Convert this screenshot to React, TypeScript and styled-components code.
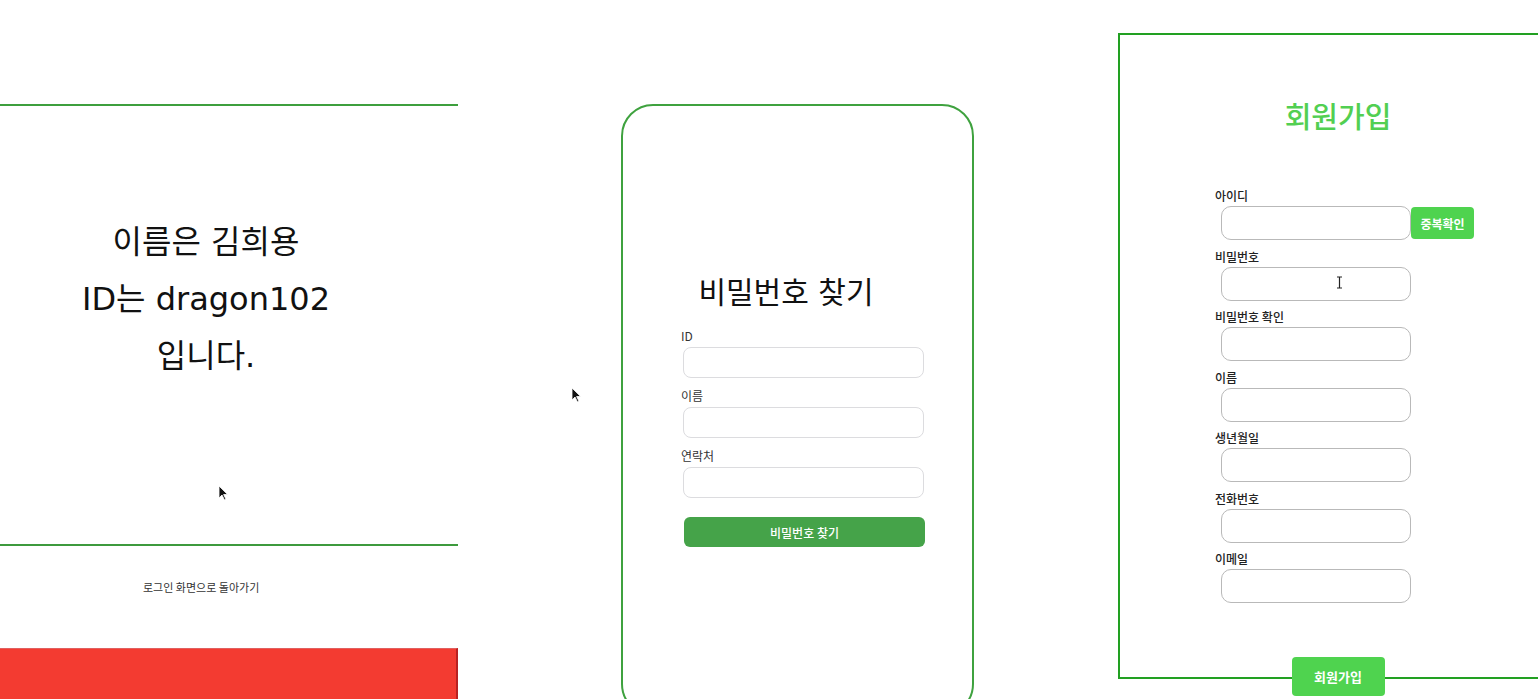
import React from "react";
import styled, { createGlobalStyle } from "styled-components";

const GlobalStyle = createGlobalStyle`
	html, body {
		margin: 0;
		padding: 0;
		background: #fff;
	}
	body {
		font-family: "Noto Sans CJK KR", "Noto Sans", sans-serif;
		color: #222;
	}
`;

const Page = styled.div`
	position: relative;
	display: flex;
	align-items: flex-start;
	width: 1538px;
	height: 699px;
	overflow: hidden;
	background: #fff;
`;

// ---- left: 아이디 찾기 결과 ----
const ResultColumn = styled.div`
	position: relative;
	flex: 0 0 458px;
	height: 699px;
	display: flex;
	flex-direction: column;
	padding-top: 104px;
	box-sizing: border-box;
`;

const ResultCard = styled.div`
	height: 442px;
	box-sizing: border-box;
	border-top: 2px solid #3d9f3d;
	border-bottom: 2px solid #3d9a3d;
	padding: 108px 46px 0 0;
	text-align: center;
`;

const ResultLine = styled.div`
	font-family: "DejaVu Sans", "Noto Sans CJK KR", sans-serif;
	font-size: 32px;
	line-height: 57px;
	color: #111;
`;

const BackLink = styled.a`
	display: block;
	margin-top: 33px;
	padding-left: 143px;
	font-size: 11px;
	line-height: 16px;
	color: #333;
	text-decoration: none;
	cursor: pointer;
`;

const AlertBar = styled.div`
	margin-top: auto;
	height: 51px;
	background: #f33b31;
	border-top: 1px solid #e06060;
	border-right: 2px solid #b82222;
	box-sizing: border-box;
`;

// ---- middle: 비밀번호 찾기 ----
const FindCard = styled.div`
	position: relative;
	flex: 0 0 353px;
	height: 612px;
	margin: 104px 0 0 163px;
	box-sizing: border-box;
	border: 2px solid #3fa23f;
	border-radius: 32px;
	padding-top: 169px;
`;

const FindTitle = styled.h2`
	margin: 0;
	padding-right: 23px;
	font-family: "DejaVu Sans", "Noto Sans CJK KR", sans-serif;
	font-weight: 400;
	font-size: 30px;
	line-height: 36px;
	text-align: center;
	color: #111;
`;

const FindForm = styled.form`
	display: flex;
	flex-direction: column;
	width: 243px;
	margin: 17px 0 0 58px;
`;

const FindLabel = styled.label`
	font-size: 12px;
	line-height: 16px;
	color: #333;
	margin-bottom: 3px;
`;

const FindInput = styled.input`
	width: 241px;
	height: 31px;
	margin: 0 0 10px 2px;
	box-sizing: border-box;
	border: 1px solid #dcdcdf;
	border-radius: 8px;
	background: #fff;
	outline: none;
`;

const FindButton = styled.button`
	width: 241px;
	height: 30px;
	margin: 9px 0 0 3px;
	border: none;
	border-radius: 6px;
	background: #45a349;
	color: #fff;
	font-family: "Noto Sans CJK KR", sans-serif;
	font-size: 12px;
	font-weight: 500;
	cursor: pointer;
`;

// ---- right: 회원가입 ----
const JoinCard = styled.div`
	position: relative;
	flex: 0 0 440px;
	height: 646px;
	margin: 33px 0 0 144px;
	box-sizing: border-box;
	border: 2px solid #22a022;
	padding-top: 62px;
	display: flex;
	flex-direction: column;
`;

const JoinTitle = styled.h1`
	margin: 0;
	font-size: 29px;
	line-height: 36px;
	font-weight: 500;
	text-align: center;
	color: #52cf52;
`;

const JoinForm = styled.div`
	display: flex;
	flex-direction: column;
	gap: 8.5px;
	margin-top: 55px;
	padding-left: 95px;
`;

const JoinField = styled.div`
	display: flex;
	flex-direction: column;
`;

const JoinLabel = styled.label`
	font-size: 12px;
	line-height: 16px;
	font-weight: 500;
	color: #222;
	margin-bottom: 2px;
`;

const InputRow = styled.div`
	display: flex;
	align-items: center;
`;

const JoinInput = styled.input`
	width: 190px;
	height: 34px;
	margin-left: 6px;
	box-sizing: border-box;
	border: 1px solid #b9b9b9;
	border-radius: 10px;
	background: #fff;
	outline: none;
`;

const CheckButton = styled.button`
	width: 63px;
	height: 32px;
	border: none;
	border-radius: 4px;
	background: #4fd34f;
	color: #fff;
	font-family: "Noto Sans CJK KR", sans-serif;
	font-size: 12px;
	font-weight: 700;
	cursor: pointer;
`;

const JoinButton = styled.button`
	align-self: center;
	margin: auto 0 -19px;
	width: 93px;
	height: 39px;
	border: none;
	border-radius: 4px;
	background: #4fd34f;
	color: #fff;
	font-family: "Noto Sans CJK KR", sans-serif;
	font-size: 13px;
	font-weight: 700;
	cursor: pointer;
`;

// mouse pointers captured in the screenshot
const Pointer = styled.svg<{ $x: number; $y: number }>`
	position: absolute;
	left: ${(p) => p.$x}px;
	top: ${(p) => p.$y}px;
	pointer-events: none;
`;

const Arrow = ({ x, y }: { x: number; y: number }) => (
	<Pointer $x={x} $y={y} width='11' height='16' viewBox='0 0 11 16'>
		<path d='M1 1 L1 13 L4 10 L6.5 15 L8 14.3 L5.6 9.5 L9.6 9.5 Z' fill='#111' stroke='#fff' strokeWidth='0.8' />
	</Pointer>
);

const TextCursor = ({ x, y }: { x: number; y: number }) => (
	<Pointer $x={x} $y={y} width='7' height='13' viewBox='0 0 7 13'>
		<path d='M1 1 H6 M3.5 1 V12 M1 12 H6' stroke='#222' strokeWidth='1.2' fill='none' />
	</Pointer>
);

const joinFields = ["비밀번호", "비밀번호 확인", "이름", "생년월일", "전화번호", "이메일"];

const App = () => {
	return (
		<Page>
			<GlobalStyle />
			<ResultColumn>
				<ResultCard>
					<ResultLine>이름은 김희용</ResultLine>
					<ResultLine>ID는 dragon102</ResultLine>
					<ResultLine>입니다.</ResultLine>
				</ResultCard>
				<BackLink>로그인 화면으로 돌아가기</BackLink>
				<AlertBar />
				<Arrow x={218} y={485} />
			</ResultColumn>

			<Arrow x={571} y={387} />

			<FindCard>
				<FindTitle>비밀번호 찾기</FindTitle>
				<FindForm onSubmit={(e) => e.preventDefault()}>
					<FindLabel>ID</FindLabel>
					<FindInput />
					<FindLabel>이름</FindLabel>
					<FindInput />
					<FindLabel>연락처</FindLabel>
					<FindInput />
					<FindButton type='submit'>비밀번호 찾기</FindButton>
				</FindForm>
			</FindCard>

			<JoinCard>
				<JoinTitle>회원가입</JoinTitle>
				<JoinForm>
					<JoinField>
						<JoinLabel>아이디</JoinLabel>
						<InputRow>
							<JoinInput />
							<CheckButton>중복확인</CheckButton>
						</InputRow>
					</JoinField>
					{joinFields.map((label) => (
						<JoinField key={label}>
							<JoinLabel>{label}</JoinLabel>
							<InputRow>
								<JoinInput type={label.startsWith("비밀번호") ? "password" : "text"} />
							</InputRow>
						</JoinField>
					))}
				</JoinForm>
				<JoinButton>회원가입</JoinButton>
				<TextCursor x={216} y={241} />
			</JoinCard>
		</Page>
	);
};

export default App;
